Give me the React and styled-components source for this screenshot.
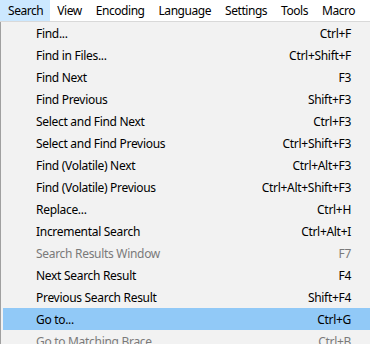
import React from 'react'
import styled, { createGlobalStyle } from 'styled-components'

const GlobalStyle = createGlobalStyle`
  html, body {
    margin: 0;
    padding: 0;
    background: #ffffff;
  }
  body {
    font-family: "Noto Sans", "Open Sans", sans-serif;
    font-size: 12px;
    letter-spacing: -0.3px;
    color: #000;
  }
`

const menus = ['Search', 'View', 'Encoding', 'Language', 'Settings', 'Tools', 'Macro']

const items = [
  { label: 'Find...', keys: 'Ctrl+F' },
  { label: 'Find in Files...', keys: 'Ctrl+Shift+F' },
  { label: 'Find Next', keys: 'F3' },
  { label: 'Find Previous', keys: 'Shift+F3' },
  { label: 'Select and Find Next', keys: 'Ctrl+F3' },
  { label: 'Select and Find Previous', keys: 'Ctrl+Shift+F3' },
  { label: 'Find (Volatile) Next', keys: 'Ctrl+Alt+F3' },
  { label: 'Find (Volatile) Previous', keys: 'Ctrl+Alt+Shift+F3' },
  { label: 'Replace...', keys: 'Ctrl+H' },
  { label: 'Incremental Search', keys: 'Ctrl+Alt+I' },
  { label: 'Search Results Window', keys: 'F7', disabled: true },
  { label: 'Next Search Result', keys: 'F4' },
  { label: 'Previous Search Result', keys: 'Shift+F4' },
  { label: 'Go to...', keys: 'Ctrl+G', active: true },
  { label: 'Go to Matching Brace', keys: 'Ctrl+B', disabled: true },
]

function App() {
  return (
    <>
      <GlobalStyle />
      <Window>
        <MenuBar>
          {menus.map((m, i) => (
            <MenuTitle key={m} $open={i === 0}>{m}</MenuTitle>
          ))}
        </MenuBar>
        <Dropdown>
          {items.map((it) => (
            <Item key={it.label} $active={it.active} $disabled={it.disabled}>
              <Label>{it.label}</Label>
              <Keys>{it.keys}</Keys>
            </Item>
          ))}
        </Dropdown>
      </Window>
    </>
  )
}

const Window = styled.div`
  width: 370px;
  height: 344px;
  overflow: hidden;
  background: #fff;
`

const MenuBar = styled.div`
  display: flex;
  height: 22px;
  align-items: stretch;
  background: #fff;
  border-bottom: 1px solid #d9d9d9;
  box-sizing: border-box;
  letter-spacing: -0.45px;
`

const MenuTitle = styled.div`
  display: flex;
  align-items: center;
  padding: 0 6px 1px 7px;
  margin-right: -1px;
  white-space: nowrap;
  box-sizing: border-box;
  border: 1px solid ${(p) => (p.$open ? '#cce8ff' : 'transparent')};
  background: ${(p) => (p.$open ? '#cce8ff' : 'transparent')};
`

const Dropdown = styled.div`
  display: flex;
  flex-direction: column;
  background: #f2f2f2;
  border-left: 1px solid #a0a0a0;
  padding-left: 2px;
`

const Item = styled.div`
  display: flex;
  align-items: center;
  justify-content: space-between;
  height: 22px;
  padding: 0 19px 0 33px;
  background: ${(p) => (p.$active ? '#91c9f7' : 'transparent')};
  color: ${(p) => (p.$disabled ? '#7a7a7a' : '#000')};
  white-space: nowrap;
`

const Label = styled.span``

const Keys = styled.span`
  text-align: right;
`

export default App
